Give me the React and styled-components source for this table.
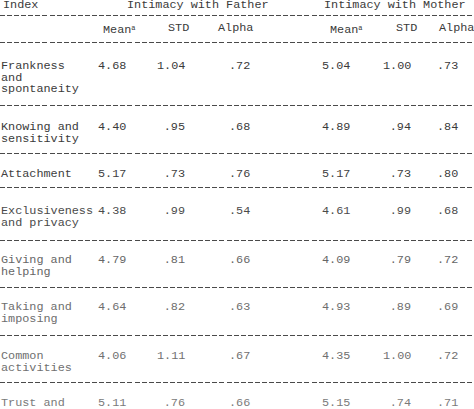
import React from "react";
import styled, { createGlobalStyle } from "styled-components";

const Global = createGlobalStyle`
  html, body { margin: 0; padding: 0; background: #ffffff; }
  body { overflow: hidden; }
`;

const Page = styled.div`
  width: 474px;
  height: 409px;
  overflow: hidden;
  padding-left: 1px;
  box-sizing: border-box;
  font-family: "Liberation Mono", "Courier New", monospace;
  font-size: 11.8px;
  line-height: 11.5px;
  color: #3a3a3a;
  background: #ffffff;
`;

const TitleRow = styled.div`
  display: grid;
  grid-template-columns: 126px 197px 1fr;
  white-space: nowrap;
`;

const IndexCell = styled.div`
  padding-left: 2px;
`;

const Rule = styled.div`
  height: 1px;
  margin-left: -1px;
  margin-top: ${(p) => p.$before || 0}px;
  background-image: repeating-linear-gradient(
    90deg,
    #4a4a4a 0,
    #4a4a4a 5px,
    transparent 5px,
    transparent 7.08px
  );
`;

const HeadRow = styled.div`
  display: grid;
  grid-template-columns: 102px 65px 50px 112px 66px 43px 1fr;
  padding: 7px 0 5.5px;
  white-space: nowrap;
`;

const Sup = styled.span`
  font-size: 7px;
  vertical-align: 3px;
`;

const DataRow = styled.div`
  display: grid;
  grid-template-columns: 97px 59px 28px 137px 61px 28px 1fr;
  align-items: start;
  padding-top: ${(p) => p.$pt}px;
  padding-bottom: ${(p) => p.$pb}px;
  color: ${(p) => p.$tone};
  white-space: nowrap;
`;

const Label = styled.div`
  display: flex;
  flex-direction: column;
`;

const Value = styled.div`
  text-align: ${(p) => (p.$right ? "right" : "left")};
  padding-left: ${(p) => p.$indent || 0}px;
`;

const rows = [
  { label: ["Frankness", "and", "spontaneity"], f: ["4.68", "1.04", ".72"], m: ["5.04", "1.00", ".73"], pt: 18, pb: 9.5, tone: "#3a3a3a" },
  { label: ["Knowing and", "sensitivity"], f: ["4.40", ".95", ".68"], m: ["4.89", ".94", ".84"], pt: 16, pb: 8, tone: "#3a3a3a" },
  { label: ["Attachment"], f: ["5.17", ".73", ".76"], m: ["5.17", ".73", ".80"], pt: 15, pb: 6.5, tone: "#404040" },
  { label: ["Exclusiveness", "and privacy"], f: ["4.38", ".99", ".54"], m: ["4.61", ".99", ".68"], pt: 18, pb: 11, tone: "#4a4a4a" },
  { label: ["Giving and", "helping"], f: ["4.79", ".81", ".66"], m: ["4.09", ".79", ".72"], pt: 14, pb: 9, tone: "#666666" },
  { label: ["Taking and", "imposing"], f: ["4.64", ".82", ".63"], m: ["4.93", ".89", ".69"], pt: 14, pb: 10, tone: "#6e6e6e" },
  { label: ["Common", "activities"], f: ["4.06", "1.11", ".67"], m: ["4.35", "1.00", ".72"], pt: 15, pb: 8, tone: "#707070" },
  { label: ["Trust and", "confidence"], f: ["5.11", ".76", ".66"], m: ["5.15", ".74", ".71"], pt: 15, pb: 8, tone: "#7a7a7a" },
];

export default function App() {
  return (
    <>
      <Global />
      <Page>
        <TitleRow>
          <IndexCell>Index</IndexCell>
          <div>Intimacy with Father</div>
          <div>Intimacy with Mother</div>
        </TitleRow>
        <Rule $before={3.5} />
        <HeadRow>
          <div />
          <div>
            Mean<Sup>a</Sup>
          </div>
          <div>STD</div>
          <div>Alpha</div>
          <div>
            Mean<Sup>a</Sup>
          </div>
          <div>STD</div>
          <div>Alpha</div>
        </HeadRow>
        <Rule />
        {rows.map((r, i) => (
          <React.Fragment key={r.label[0]}>
            <DataRow $pt={r.pt} $pb={r.pb} $tone={r.tone}>
              <Label>
                {r.label.map((l) => (
                  <span key={l}>{l}</span>
                ))}
              </Label>
              <Value>{r.f[0]}</Value>
              <Value $right>{r.f[1]}</Value>
              <Value $indent={44}>{r.f[2]}</Value>
              <Value>{r.m[0]}</Value>
              <Value $right>{r.m[1]}</Value>
              <Value $indent={26}>{r.m[2]}</Value>
            </DataRow>
            {i < rows.length - 1 && <Rule />}
          </React.Fragment>
        ))}
      </Page>
    </>
  );
}
